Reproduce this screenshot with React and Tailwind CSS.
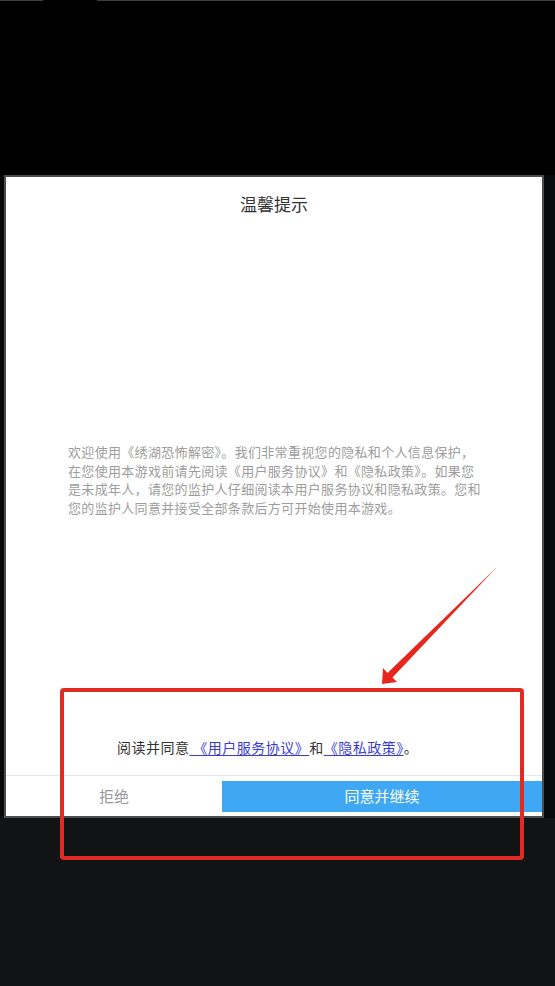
import React from 'react';

const bodyLines = [
  '欢迎使用《绣湖恐怖解密》。我们非常重视您的隐私和个人信息保护，',
  '在您使用本游戏前请先阅读《用户服务协议》和《隐私政策》。如果您',
  '是未成年人，请您的监护人仔细阅读本用户服务协议和隐私政策。您和',
  '您的监护人同意并接受全部条款后方可开始使用本游戏。',
];

export default function App() {
  return (
    <div
      className="relative w-[555px] h-[986px] flex flex-col bg-[#111315] overflow-hidden"
      style={{ fontFamily: '"Noto Sans CJK SC", "Noto Sans", sans-serif' }}
    >
      {/* top black area with status line */}
      <div className="h-[175px] bg-black">
        <div className="h-px bg-[#3e3e3e] flex">
          <div className="ml-[43px] w-[54px] h-px bg-black" />
        </div>
      </div>

      {/* dialog row */}
      <div className="flex bg-[#08090a]">
        <div className="ml-[4px] w-[540px] h-[643px] bg-white border-2 border-[#4d4d4d] flex flex-col">
          <div className="pt-[15px] text-center text-[17px] leading-[24px] text-[#333]">温馨提示</div>

          <div className="mt-[227px] pl-[62px] text-[13px] leading-[18.5px] text-[#9d9d9d] tracking-[0.32px]">
            {bodyLines.map((l) => (
              <div key={l} className="whitespace-nowrap">{l}</div>
            ))}
          </div>

          <div className="mt-[220px] pl-[111px] text-[14px] leading-[20px] text-[#333] whitespace-nowrap tracking-[0.5px]">
            阅读并同意
            <span className="text-[#3b3bd4] underline underline-offset-2"> 《用户服务协议》</span>
            和
            <span className="text-[#3b3bd4] underline underline-offset-2">《隐私政策》</span>
            。
          </div>

          <div className="mt-[18px] border-t border-[#e6e6e6] flex flex-1">
            <div className="w-[216px] flex items-center justify-center text-[15px] text-[#9a9a9a]">拒绝</div>
            <div className="flex-1 pt-[5px] pb-[4px] flex">
              <div className="flex-1 bg-[#3ea8f4] flex items-center justify-center text-[15px] text-white">
                同意并继续
              </div>
            </div>
          </div>
        </div>
      </div>

      <div className="flex-1" />

      {/* annotation: red box */}
      <div className="absolute left-[60px] top-[688px] w-[464px] h-[172px] border-4 border-[#e02b22] rounded-[4px] pointer-events-none" />

      {/* annotation: red arrow */}
      <svg
        className="absolute inset-0 pointer-events-none"
        width="555"
        height="986"
        viewBox="0 0 555 986"
      >
        <polygon
          fill="#e8261e"
          points="497,567 392.5,677.5 397,682 382,684 383,668 387.5,673"
        />
      </svg>
    </div>
  );
}
